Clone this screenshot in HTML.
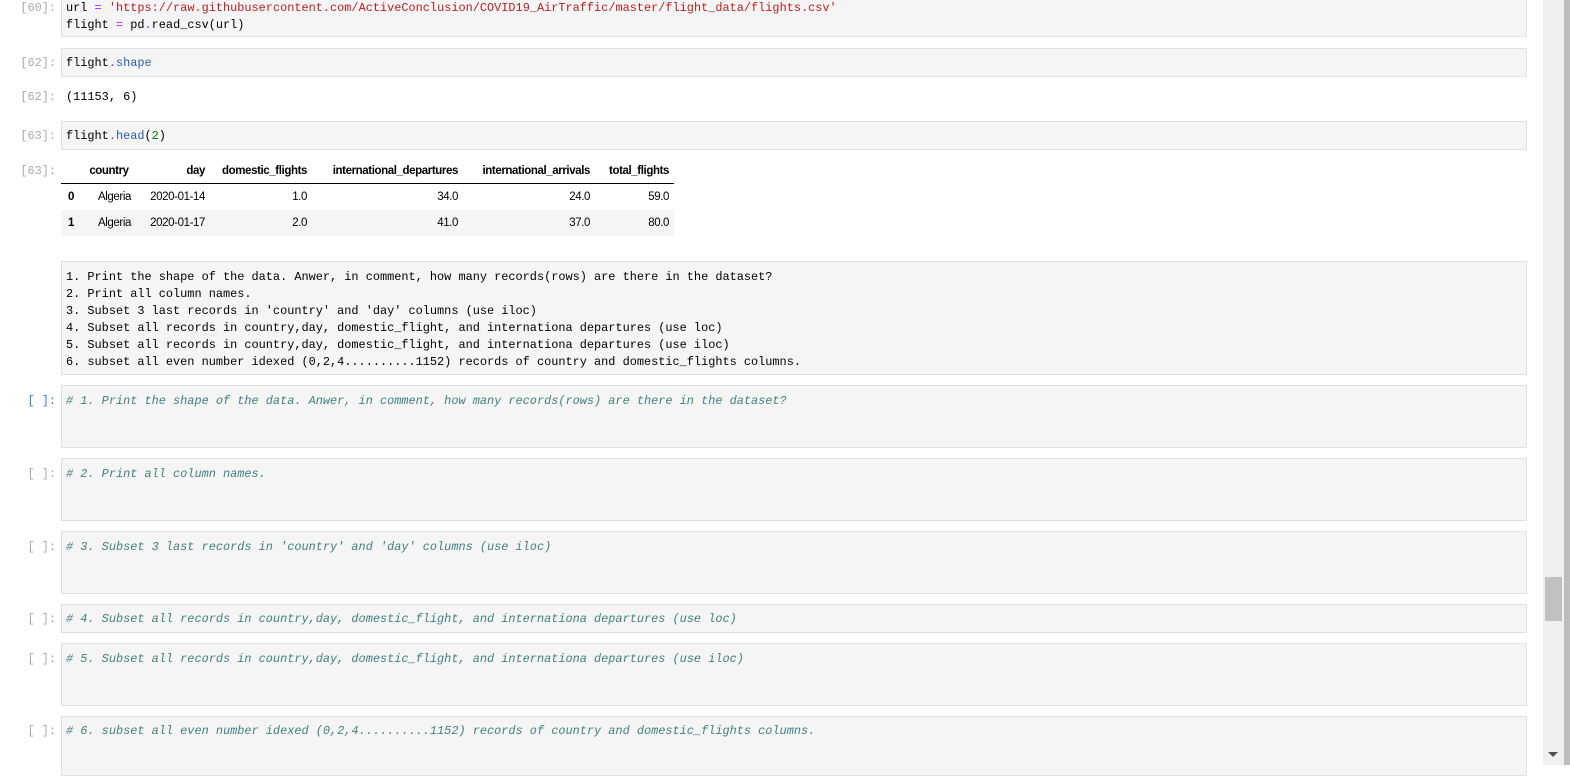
<!DOCTYPE html>
<html><head><meta charset="utf-8"><style>
body{margin:0;width:1570px;height:765px;background:#fff;overflow:hidden;position:relative;font-family:"Liberation Mono",monospace;font-size:11.9px}
.c{position:absolute;left:61px;width:1466px;background:#f5f5f5;border:1px solid #e0e0e0;box-sizing:border-box}
.p{position:absolute;width:56px;text-align:right;color:#aaa;line-height:17px}
.t{position:absolute;left:66px;line-height:17px;white-space:pre;color:#000}
.cm{color:#408080;font-style:italic}
.s{color:#ba2121}.o{color:#aa22ff}.a{color:#2a5db0}.n{color:#008000}
table{position:absolute;left:61px;top:158px;border-collapse:collapse;table-layout:fixed;width:613px;font-family:"Liberation Sans",sans-serif;font-size:11.5px;letter-spacing:-0.4px}
td,th{padding:0 5px;height:26px;text-align:right;white-space:nowrap;overflow:hidden}
th{font-weight:bold}
thead th{border-bottom:1px solid #000;height:25px}
tr.g td,tr.g th{background:#f5f5f5}
</style></head><body>
<div class="c" style="top:-3px;height:40px"></div>
<div class="p" style="top:0px">[60]:</div>
<div class="t" style="top:0px">url <span class="o">=</span> <span class="s">'https://raw.githubusercontent.com/ActiveConclusion/COVID19_AirTraffic/master/flight_data/flights.csv'</span>
flight <span class="o">=</span> pd<span class="o">.</span>read_csv(url)</div>

<div class="c" style="top:48px;height:29px"></div>
<div class="p" style="top:55px">[62]:</div>
<div class="t" style="top:55px">flight<span class="o">.</span><span class="a">shape</span></div>

<div class="p" style="top:89px">[62]:</div>
<div class="t" style="top:89px">(11153, 6)</div>

<div class="c" style="top:121px;height:29px"></div>
<div class="p" style="top:128px">[63]:</div>
<div class="t" style="top:128px">flight<span class="o">.</span><span class="a">head</span>(<span class="n">2</span>)</div>

<div class="p" style="top:163px">[63]:</div>
<table>
<colgroup><col style="width:21px"><col style="width:54px"><col style="width:74px"><col style="width:102px"><col style="width:151px"><col style="width:132px"><col style="width:79px"></colgroup>
<thead><tr><th></th><th style="text-align:center">country</th><th>day</th><th>domestic_flights</th><th>international_departures</th><th>international_arrivals</th><th>total_flights</th></tr></thead>
<tbody>
<tr><th style="text-align:left;padding-left:7px">0</th><td>Algeria</td><td>2020-01-14</td><td>1.0</td><td>34.0</td><td>24.0</td><td>59.0</td></tr>
<tr class="g"><th style="text-align:left;padding-left:7px">1</th><td>Algeria</td><td>2020-01-17</td><td>2.0</td><td>41.0</td><td>37.0</td><td>80.0</td></tr>
</tbody></table>

<div class="c" style="top:261px;height:114px"></div>
<div class="t" style="top:269px">1. Print the shape of the data. Anwer, in comment, how many records(rows) are there in the dataset?
2. Print all column names.
3. Subset 3 last records in 'country' and 'day' columns (use iloc)
4. Subset all records in country,day, domestic_flight, and internationa departures (use loc)
5. Subset all records in country,day, domestic_flight, and internationa departures (use iloc)
6. subset all even number idexed (0,2,4..........1152) records of country and domestic_flights columns.</div>

<div class="c" style="top:385px;height:63px"></div>
<div class="p" style="top:393px;color:#307fc1">[ ]:</div>
<div class="t cm" style="top:393px"># 1. Print the shape of the data. Anwer, in comment, how many records(rows) are there in the dataset?</div>

<div class="c" style="top:458px;height:63px"></div>
<div class="p" style="top:466px">[ ]:</div>
<div class="t cm" style="top:466px"># 2. Print all column names.</div>

<div class="c" style="top:531px;height:63px"></div>
<div class="p" style="top:539px">[ ]:</div>
<div class="t cm" style="top:539px"># 3. Subset 3 last records in 'country' and 'day' columns (use iloc)</div>

<div class="c" style="top:604px;height:29px"></div>
<div class="p" style="top:611px">[ ]:</div>
<div class="t cm" style="top:611px"># 4. Subset all records in country,day, domestic_flight, and internationa departures (use loc)</div>

<div class="c" style="top:643px;height:63px"></div>
<div class="p" style="top:651px">[ ]:</div>
<div class="t cm" style="top:651px"># 5. Subset all records in country,day, domestic_flight, and internationa departures (use iloc)</div>

<div class="c" style="top:716px;height:60px"></div>
<div class="p" style="top:723px">[ ]:</div>
<div class="t cm" style="top:723px"># 6. subset all even number idexed (0,2,4..........1152) records of country and domestic_flights columns.</div>

<div style="position:absolute;left:1543px;top:0;width:21px;height:765px;background:#f0f0f0"></div>
<div style="position:absolute;left:1545px;top:577px;width:17px;height:44px;background:#c1c1c1"></div>
<div style="position:absolute;left:1548px;top:752px;width:0;height:0;border-left:5px solid transparent;border-right:5px solid transparent;border-top:5px solid #505050"></div>
<div style="position:absolute;left:1564px;top:0;width:6px;height:765px;background:#bdbdbd"></div>
</body></html>
